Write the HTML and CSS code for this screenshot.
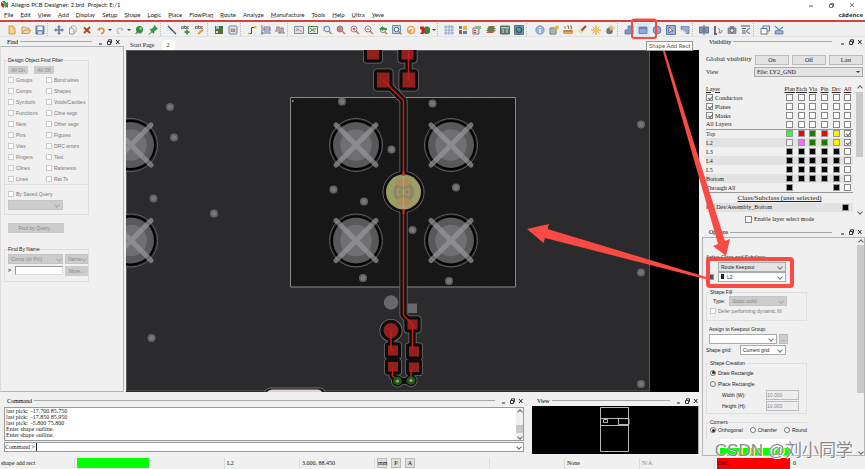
FILE: index.html
```html
<!DOCTYPE html>
<html lang="en">
<head>
<meta charset="utf-8">
<title>Allegro PCB Designer: 2.brd Project: E:/1</title>
<link rel="stylesheet" href="styles.css">
</head>
<body>
<div class="app">
  <header>
    <div class="titlebar">
      <svg class="logo" viewBox="0 0 8 8"><path d="M0 1l3 2v4l-3-2z" fill="#d22"/><path d="M3 3l4-2v3l-3 3z" fill="#2a3"/><path d="M1 0h3l1 2-2 1z" fill="#2a3"/><path d="M5 5l2-1v3z" fill="#d22"/></svg>
      <span class="title">Allegro PCB Designer: 2.brd&nbsp; Project: E:/1</span>
      <svg class="winctl" viewBox="0 0 46 8"><g fill="none" stroke="#555"><path d="M0 5h4"/><path d="M20.500 3.500h3v3h-3zM21.500 3.500v-1h3v3h-1" stroke-width=".8"/><path d="M41 2l4 4M45 2l-4 4" stroke-width=".8"/></g></svg>
    </div>
    <div class="menubar">
      <nav>
        <a href="#"><u>F</u>ile</a><a href="#"><u>E</u>dit</a><a href="#"><u>V</u>iew</a><a href="#"><u>A</u>dd</a><a href="#"><u>D</u>isplay</a><a href="#">Set<u>u</u>p</a><a href="#"><u>S</u>hape</a><a href="#"><u>L</u>ogic</a><a href="#"><u>P</u>lace</a><a href="#">FlowPla<u>n</u></a><a href="#"><u>R</u>oute</a><a href="#">Analy<u>z</u>e</a><a href="#"><u>M</u>anufacture</a><a href="#"><u>T</u>ools</a><a href="#"><u>H</u>elp</a><a href="#"><u>U</u>ltra</a><a href="#"><u>Y</u>eve</a>
      </nav>
      <span class="brand">cādence</span>
    </div>
  </header>

  <div class="toolbar">
    <button aria-label="New"><svg viewBox="0 0 10 10"><path d="M2 1h4l2 2v6H2z" fill="#f7d48a" stroke="#c08a3a" stroke-width=".8"/><path d="M6 1v2h2" fill="#fff" stroke="#c08a3a" stroke-width=".6"/></svg></button>
    <button aria-label="Open"><svg viewBox="0 0 10 10"><path d="M1 8.500V2h3l1 1h3v2" fill="#f6e2b5" stroke="#b98d45" stroke-width=".8"/><path d="M1 8.500L3 5h6.500L8 8.500z" fill="#fbd592" stroke="#b98d45" stroke-width=".8"/></svg></button>
    <button aria-label="Save"><svg viewBox="0 0 10 10"><path d="M1 1h8v8H1z" fill="#7894c4" stroke="#47608f" stroke-width=".8"/><path d="M2.500 1.500h5V5h-5z" fill="#fff"/><path d="M3 6.500h4V9H3z" fill="#cfd9ea"/></svg></button>
    <i class="sep"></i>
    <button aria-label="Move"><svg viewBox="0 0 10 10"><path d="M5 0l2 2.200H5.800v2h2V3L10 5 7.800 7V5.800h-2v2H7L5 10 3 7.800h1.200v-2h-2V7L0 5l2.200-2v1.200h2v-2H3z" fill="#5f7ea8"/></svg></button>
    <button aria-label="Copy"><svg viewBox="0 0 10 10"><path d="M3.500 1h3L8 2.500V7H3.500z" fill="#fff" stroke="#999" stroke-width=".8"/><path d="M1.500 3h3L6 4.500V9H1.500z" fill="#eee" stroke="#888" stroke-width=".8"/></svg></button>
    <button aria-label="Delete"><svg viewBox="0 0 10 10"><path d="M2 2.500l6 5.500M8 2L2 8" stroke="#b5401c" stroke-width="2"/></svg></button>
    <button aria-label="Undo"><svg viewBox="0 0 10 10"><path d="M3 4c3-2 5.500 0 5 2S6 8.500 5 8.500" fill="none" stroke="#e08a3a" stroke-width="1.500"/><path d="M1 4.500L4 2v4z" fill="#e08a3a"/></svg></button><i class="more"></i>
    <button aria-label="Redo"><svg viewBox="0 0 10 10"><path d="M7 4C4 2 2 4 2 6s2 2.500 3 2.500" fill="none" stroke="#c3c3c3" stroke-width="1.200"/><path d="M9 4.500L6 2v4z" fill="#c3c3c3"/></svg></button><i class="more"></i>
    <button aria-label="Unpin"><svg viewBox="0 0 10 10"><path d="M1.500 9L4 6" stroke="#555"/><circle cx="5.500" cy="4.500" r="3.500" fill="#2f8f45"/><circle cx="6.500" cy="3.500" r="1.500" fill="#7fca86"/><path d="M2 8h6" stroke="#777" stroke-width=".8"/></svg></button>
    <button aria-label="Pin"><svg viewBox="0 0 10 10"><path d="M1 9.500L4.500 6" stroke="#555"/><path d="M2 4.500l2-.5 2-2 .5-1.500L9.500 4 8 4.500l-2 2L5.500 8.500z" fill="#3d9a52" stroke="#26733a" stroke-width=".6"/></svg></button>
    <i class="sep"></i>
    <button aria-label="Line"><svg viewBox="0 0 10 10"><path d="M1 1l8 8" stroke="#42516b" stroke-width="1.200"/></svg></button>
    <button aria-label="Add text"><svg viewBox="0 0 10 10"><path d="M.5 1.500h2v2h-2zM3.500.500v3h2v-2h-2M8 1.500H6.500v2H8" fill="none" stroke="#555" stroke-width=".7"/><path d="M6 4.500v5M3.500 7h5" stroke="#3f9e4e" stroke-width="2"/></svg></button>
    <button aria-label="Edit text"><svg viewBox="0 0 10 10"><path d="M.5 1.500h2v2h-2zM3.500.500v3h2v-2h-2M8 1.500H6.500v2H8" fill="none" stroke="#555" stroke-width=".7"/><path d="M3 9l5-4.500" stroke="#e5963c" stroke-width="2"/></svg></button>
    <i class="sep"></i>
    <button aria-label="Place manual"><svg viewBox="0 0 10 10"><path d="M1 1h8v8H1z" fill="#2f7a42"/><path d="M2 1h3v3H2z" fill="#9cc9a2"/><path d="M5 4h3v4H5z" fill="#c33"/><path d="M2 6h2v2H2z" fill="#cde"/></svg></button>
    <button aria-label="Component"><svg viewBox="0 0 10 10"><rect x="1" y="1" width="8" height="8" rx="1" fill="#dde4ef" stroke="#7585a5"/><path d="M3 4h4v2.500H3z" fill="#c99" stroke="#a66" stroke-width=".6"/></svg></button>
    <i class="sep"></i>
    <button aria-label="Add connect"><svg viewBox="0 0 10 10"><path d="M2 8.500h2.500v-6H8" fill="none" stroke="#444"/><path d="M1 7.500h2v2H1zM7 1h2.500v2.500H7z" fill="#e9c23f"/></svg></button>
    <button aria-label="Slide"><svg viewBox="0 0 10 10"><path d="M1 0v10M0 8h10M3 2h6v4H3z" fill="none" stroke="#5877a8"/><path d="M3 4h6" stroke="#c55"/></svg></button>
    <button aria-label="Delay tune"><svg viewBox="0 0 10 10"><path d="M0 6h2V2h2v6h2V3h2v5h2" fill="none" stroke="#887777" stroke-width="1.200"/></svg></button>
    <i class="sep"></i>
    <button aria-label="Unrats"><svg viewBox="0 0 10 10"><path d="M.5 1.500h9v7h-9z" fill="#e8dede" stroke="#7c8cab"/><path d="M2 4h2l2 2h2M2 6l3-2" fill="none" stroke="#a77" stroke-width=".8"/></svg></button>
    <button aria-label="Rats"><svg viewBox="0 0 10 10"><path d="M.5 1.500h9v7h-9z" fill="#dcebdc" stroke="#4d765c"/><path d="M2 3l5 4M2 7l3-3h3" fill="none" stroke="#383" stroke-width=".9"/></svg></button>
    <button aria-label="Zoom by points"><svg viewBox="0 0 10 10"><path d="M1 1h5v5H1z" fill="#bcd0ea"/><circle cx="5" cy="4" r="2.800" fill="#dce9f8" stroke="#6782ad"/><path d="M7 6l2.500 3" stroke="#b9824e" stroke-width="1.500"/></svg></button>
    <button aria-label="Zoom fit"><svg viewBox="0 0 10 10"><circle cx="4" cy="4" r="3" fill="#c58585" stroke="#8d7d94"/><path d="M6 6l3 3" stroke="#b9824e" stroke-width="1.500"/></svg></button>
    <button aria-label="Zoom in"><svg viewBox="0 0 10 10"><circle cx="4" cy="4" r="3" fill="#fff" stroke="#95809a"/><path d="M2.500 4h3M4 2.500v3" stroke="#c33"/><path d="M6 6l3 3" stroke="#b9824e" stroke-width="1.500"/></svg></button>
    <button aria-label="Zoom out"><svg viewBox="0 0 10 10"><circle cx="4" cy="4" r="3" fill="#fff" stroke="#95809a"/><path d="M2.500 4h3" stroke="#c33"/><path d="M6 6l3 3" stroke="#b9824e" stroke-width="1.500"/></svg></button>
    <button aria-label="Zoom previous"><svg viewBox="0 0 10 10"><circle cx="5" cy="5" r="2.600" fill="#eee" stroke="#888"/><path d="M1 4l4-3v2h4v2H5v1z" fill="#3c9950"/><path d="M7 7l2 2" stroke="#b9824e" stroke-width="1.500"/></svg></button>
    <button aria-label="Zoom selection"><svg viewBox="0 0 10 10"><path d="M.5.500h8v8h-8z" fill="#bdd3ea" stroke="#6f8fb3"/><circle cx="4.500" cy="4.500" r="2.200" fill="#fff" stroke="#557"/><path d="M6.500 6.500L9.500 9.500" stroke="#b9824e" stroke-width="1.300"/></svg></button>
    <button aria-label="Refresh"><svg viewBox="0 0 10 10"><circle cx="5" cy="5" r="4.300" fill="#eda24a"/><path d="M3 5a2 2 0 1 1 2 2" fill="none" stroke="#fff" stroke-width="1.300"/></svg></button>
    <button aria-label="3D canvas"><svg viewBox="0 0 10 10"><path d="M0 1.500h3.500L5 3v5L3 9H0l1.500-2V5L0 4z" fill="#c52525"/><path d="M5 1.500h3L10 3v4.500L8 9H5z" fill="#23933a"/></svg></button><i class="more"></i>
    <i class="sep"></i>
    <button aria-label="Grid"><svg viewBox="0 0 10 10"><path d="M2 0v10M5 0v10M8 0v10M0 2h10M0 5h10M0 8h10" stroke="#8ea8cf" stroke-width="1"/></svg></button>
    <button aria-label="Color"><svg viewBox="0 0 10 10"><path d="M1 1h3v3H1z" fill="#489858"/><path d="M5 1h4v4H5z" fill="#e8b24a"/><path d="M1 5h3v4H1z" fill="#c85046"/><path d="M5 6h4v3H5z" fill="#5b7fb5"/></svg></button>
    <button aria-label="Shadow"><svg viewBox="0 0 10 10"><path d="M1 3h6v6H1z" fill="#ddd" stroke="#777"/><path d="M3 1h6v3H3z" fill="#9bb28f"/><path d="M2 5h2v1H2zM2 7h2v1H2z" fill="#c33"/></svg></button>
    <button aria-label="Layers"><svg viewBox="0 0 10 10"><path d="M0 8l3-3h7L7 8z" fill="#b8604b"/><path d="M0 6l3-3h7L7 6z" fill="#54864c"/><path d="M1 4l2-3h6L7 4z" fill="#8a6a4d"/></svg></button>
    <button aria-label="Cross section"><svg viewBox="0 0 10 10"><path d="M.5 1h9v8h-9z" fill="#467f60" stroke="#667"/><path d="M1 2h8v1.500H1z" fill="#adc5dd"/><path d="M3 4v4M7 4v4" stroke="#dde" stroke-width="1"/><path d="M5 4v3" stroke="#d55"/></svg></button>
    <button aria-label="World view"><svg viewBox="0 0 10 10"><path d="M.5.500h9v9h-9z" fill="#7692b8" stroke="#677"/><circle cx="5" cy="5" r="3.500" fill="#335f92"/><path d="M3 3l3 0 1 2-2 2-2-2z" fill="#61a36b"/></svg></button>
    <i class="sep wide"></i>
    <button aria-label="Info"><svg viewBox="0 0 10 10"><circle cx="5" cy="5" r="4.200" fill="#9db5dd" stroke="#7288b4" stroke-width=".8"/><path d="M5 4v4M5 2v1" stroke="#fff" stroke-width="1.300"/></svg></button>
    <button aria-label="Constraints"><svg viewBox="0 0 10 10"><path d="M1 3h6v6H1z" fill="#ddd" stroke="#666"/><path d="M3 4v4M5 4v4" stroke="#4a4"/><circle cx="8" cy="2.500" r="2" fill="#efb72f"/></svg></button>
    <button aria-label="Measure"><svg viewBox="0 0 10 10"><path d="M0 5h10v4H0z" fill="#eda24a"/><path d="M2 5v2M4 5v2M6 5v2M8 5v2M2 1v3M4 1h1.500v3M7 1h1.500v3H7" fill="none" stroke="#655" stroke-width=".7"/></svg></button>
    <button aria-label="Highlight"><svg viewBox="0 0 10 10"><path d="M1 5l3 4 3-4-2-2z" fill="#f3df88"/><path d="M5 5l4-4" stroke="#8a4b37" stroke-width="2"/><path d="M4 4l2 2" stroke="#c66" stroke-width="1.500"/></svg></button>
    <button aria-label="Brighten"><svg viewBox="0 0 10 10"><path d="M5 0v10M0 5h10M1.500 1.500l7 7M8.500 1.500l-7 7" stroke="#d9963b" stroke-width=".9"/><circle cx="5" cy="5" r="2.700" fill="#f7c34c"/></svg></button>
    <button aria-label="Dim"><svg viewBox="0 0 10 10"><path d="M6 0v6M3 3h7M4 1l4 4M8 1L4 5" stroke="#e5a33b" stroke-width=".9"/><circle cx="4.500" cy="6" r="3.300" fill="#6d7786"/><circle cx="6" cy="4" r="1.500" fill="#f0b84a"/></svg></button>
    <i class="sep"></i>
    <button aria-label="Shape add"><svg viewBox="0 0 10 10"><path d="M1 9V5h3V1h5v8z" fill="#8198c5" stroke="#5d74a2" stroke-width=".8"/></svg></button>
    <button class="on" aria-label="Shape Add Rect"><svg viewBox="0 0 10 10"><path d="M1 2h8v6.500H1z" fill="#93a7cf" stroke="#5d74a2" stroke-width=".8"/><path d="M1.500 2.500h7V4h-7z" fill="#6980b0"/></svg></button>
    <button aria-label="Shape add circle"><svg viewBox="0 0 10 10"><circle cx="5" cy="5" r="4" fill="#8ea3cd" stroke="#5d74a2" stroke-width=".8"/></svg></button>
    <button aria-label="Select shape"><svg viewBox="0 0 10 10"><path d="M.5.500h9v9h-9z" fill="#9eb1d6" stroke="#5f77a6"/><path d="M3 2l4 4H5l-2 2z" fill="#fff" stroke="#335" stroke-width=".6"/></svg></button>
    <button aria-label="Void"><svg viewBox="0 0 10 10"><path d="M1 1.500h8v7H6l-5-4z" fill="#95a8ce" stroke="#6d80ab" stroke-width=".8"/><path d="M2 5l4 3" stroke="#fff"/></svg></button>
    <i class="sep"></i>
    <button aria-label="Mirror"><svg viewBox="0 0 10 10"><path d="M.5 2h3.500v6H.5zM6 2h3.500v6H6z" fill="#8398bd" stroke="#4d5e80" stroke-width=".8"/><path d="M5 0v10" stroke="#445"/></svg></button>
    <button aria-label="Spin"><svg viewBox="0 0 10 10"><path d="M2 1v8M1 9h3" stroke="#667" stroke-width="1.800"/><path d="M5 3l2 2-1 3h2l1.500-3" fill="none" stroke="#789"/></svg></button>
    <button aria-label="Snapshot"><svg viewBox="0 0 10 10"><path d="M1 3h8v5.500H1zM3 1.500h4V3H3z" fill="#99a" stroke="#667" stroke-width=".6"/><circle cx="5" cy="5.500" r="2" fill="#dde" stroke="#556" stroke-width=".8"/></svg></button>
    <button aria-label="Align"><svg viewBox="0 0 10 10"><path d="M0 1h9M1 3.500h4M1 6h3M1 8h4" stroke="#556" stroke-width="1"/><path d="M9 3L5 6l4 3" fill="none" stroke="#6b8db5" stroke-width="1.200"/></svg></button>
    <i class="sep"></i>
    <button aria-label="Windows"><svg viewBox="0 0 10 10"><path d="M3 1h6.500v5H3z" fill="#dce5f5" stroke="#5c73a4"/><path d="M1 3.500h6v5.500H1z" fill="#fff" stroke="#5c73a4"/><path d="M5 9h3V6" fill="none" stroke="#e5a33b"/></svg></button>
    <button aria-label="Swap"><svg viewBox="0 0 10 10"><path d="M1 1l4 4 4-3" fill="none" stroke="#5c93a4" stroke-width="1.200"/><path d="M1 6l4-1 4 1v3H1z" fill="#9eb1d6" stroke="#5c73a4" stroke-width=".8"/></svg></button>
  </div>

  <div class="main">
    <div class="left">
      <div class="work">
        <section class="find">
          <div class="cap pad"><span>Find</span><hr><svg class="ctl" viewBox="0 0 22 6"><use href="#ctl"/></svg></div>
          <div class="findbox">
            <div class="group filter">
              <h3>Design Object Find Filter</h3>
              <div class="row"><button class="flat">All On</button><button class="flat">All Off</button></div>
              <div class="checks" id="checks"></div>
            </div>
            <div class="group saved">
              <label class="chk"><input type="checkbox" disabled>By Saved Query</label>
              <span class="sel dis"><select aria-label="Saved query" disabled><option></option></select></span>
            </div>
            <button class="flat query">Find by Query...</button>
            <div class="group byname">
              <h3>Find By Name</h3>
              <div class="nrow"><span class="sel dis"><select aria-label="Object type" disabled><option>Comp (or Pin)</option></select></span><span class="sel dis"><select aria-label="Name type" disabled><option>Name</option></select></span></div>
              <div class="nrow"><label class="gt"><b>&gt;</b><input type="text" aria-label="Name"></label><button class="flat">More...</button></div>
            </div>
          </div>
        </section>
        <section class="design">
          <div class="tabs"><a href="#">Start Page</a><a href="#" class="cur">2</a></div>
          <svg class="board" viewBox="126 50 573 342" preserveAspectRatio="xMinYMin slice">
            <defs>
              <g id="ctl" fill="none" stroke="#222"><path d="M1 5h3"/><path d="M9.500 2.500h3v3h-3zM10.500 2V.800h3v3h-1" stroke-width=".9"/><path d="M18 1l3.500 4M21.500 1L18 5"/></g>
              <g id="mount"><circle r="26.500" fill="#1b1b1c" stroke="#747476" stroke-width=".8"/><circle r="25" fill="#000"/><circle r="23" fill="#59595b"/><circle r="15.800" fill="#707072"/><path d="M-20-20L20 20M20-20L-20 20" stroke="#98989a" stroke-opacity=".7" stroke-width="5" stroke-linecap="round"/></g>
              <g id="dot"><circle r="4" fill="#636365"/><circle r="2.200" fill="#7a7a7c"/></g>
              <pattern id="mesh" width="3" height="3" patternUnits="userSpaceOnUse"><path d="M0 0h3v3H0z" fill="#151515"/><path d="M0 0l3 3M3 0L0 3" stroke="#1b1b1b" stroke-width=".5"/></pattern>
              <g id="pads"><path d="M367 46h12v13.500h-12zM401.500 46h12v13.500h-12zM377 72.500h12.500v15H377zM402.500 72.500H415v15h-12.500zM407.500 319.500h10v10h-10zM388 345.500h10v10h-10zM388 362h10v9.500h-10zM409 346.500h10v10h-10zM409 362.500h10v9.500h-10z"/><circle cx="391" cy="330.500" r="7.500"/></g>
              <g id="traces" fill="none"><path d="M408.500 50v30M383 80l20.500 20.500V315l9 9.500v26M391 330v19l1.500 2M392.500 367v9l5 5M413.500 367l-2.500 3v10"/></g>
            </defs>
            <path d="M126 50h574v342H126z" fill="#000"/>
            <path d="M126.500 50.500h523V391h-523z" fill="#2b2b2d" stroke="#5a5a5c"/>
            <path d="M290.500 97.500h225v189.500h-225z" fill="url(#mesh)" stroke="#8a8a8c"/>
            <path d="M292 100h1.500v2H292z" fill="#888"/>
            <use href="#mount" x="131" y="145"/><use href="#mount" x="131" y="240.500"/><use href="#mount" x="356" y="145"/><use href="#mount" x="451" y="145"/><use href="#mount" x="356" y="240.500"/><use href="#mount" x="451" y="240.500"/>
            <use href="#dot" x="170" y="107"/><use href="#dot" x="174" y="137.500"/><use href="#dot" x="153.500" y="198.500"/><use href="#dot" x="214" y="213.500"/><use href="#dot" x="342" y="101.500"/><use href="#dot" x="391.500" y="149.500"/><use href="#dot" x="333.500" y="189.500"/><use href="#dot" x="364" y="201.500"/><use href="#dot" x="432.500" y="103.500"/><use href="#dot" x="456" y="187.500"/><use href="#dot" x="641" y="124.500"/><use href="#dot" x="641" y="272.500"/><use href="#dot" x="641" y="384"/><use href="#dot" x="412.500" y="230"/><use href="#dot" x="363" y="278"/><use href="#dot" x="449" y="281"/><use href="#dot" x="151.500" y="338"/>
            <g stroke="#707072" stroke-width="8" stroke-linejoin="round"><use href="#pads"/><use href="#traces"/><circle cx="403.500" cy="192" r="17"/><path d="M397.500 381h13.500"/><circle cx="397.500" cy="381" r="2.500"/><circle cx="411" cy="380.500" r="2.500"/></g>
            <g stroke="#0d0d0d" stroke-width="6.400" stroke-linejoin="round"><use href="#pads"/><use href="#traces"/><circle cx="403.500" cy="192" r="17"/><path d="M397.500 381h13.500"/><circle cx="397.500" cy="381" r="2.500"/><circle cx="411" cy="380.500" r="2.500"/></g>
            <circle cx="391" cy="302.500" r="7.200" fill="#68686a"/><path d="M407.500 303.500h9.500v9.500h-9.500z" fill="#68686a"/>
            <use href="#pads" fill="#92201c"/>
            <use href="#traces" stroke="#c61d1a" stroke-width="1.600"/>
            <circle cx="403.500" cy="192" r="17.500" fill="#9c9c66"/>
            <circle cx="403.500" cy="192" r="10.500" fill="#8b8668"/>
            <path d="M398 179h11l3 4-5 3h-7l-5-3zM398 205h11l3-4-5-3h-7l-5 3z" fill="#ad8d5c"/>
            <path d="M398 188l11 8v-8l-11 8zM403.500 175v34" fill="none" stroke="#c3a452" stroke-width=".8"/>
            <path d="M403.500 171v5M403.500 209v5" stroke="#e22" stroke-width="1.800"/>
            <g fill="#1f5c12"><circle cx="397.500" cy="381" r="4.300"/><circle cx="411" cy="380.500" r="4.300"/></g><g fill="#9aa88a"><circle cx="397.500" cy="381" r="1.500"/><circle cx="411" cy="380.500" r="1.500"/></g>
            <path d="M264.500 392q1-4 6-4h50q4 0 4.500 4" fill="#111" stroke="#888" stroke-width=".8"/><path d="M267 392q2-2.500 5-2.500h46q3 0 4 2.500z" fill="#e5cfd2"/>
          </svg>
        </section>
      </div>
      <div class="bottom">
        <section class="command">
          <div class="cap"><span>Command</span><hr><svg class="ctl" viewBox="0 0 22 6"><use href="#ctl"/></svg></div>
          <div class="log"><div class="lines"><p>last pick:&nbsp; -17.700 85.750</p><p>last pick:&nbsp; -17.850 85.950</p><p>last pick:&nbsp; -5.800 75.800</p><p>Enter shape outline.</p><p>Enter shape outline.</p></div><div class="sb"><i class="up"></i><b></b><i class="dn"></i></div></div>
          <div class="prompt"><label for="cmd">Command &gt;</label><input id="cmd" type="text"><i class="dn"></i></div>
        </section>
        <section class="view">
          <div class="cap"><span>View</span><hr><svg class="ctl" viewBox="0 0 22 6"><use href="#ctl"/></svg></div>
          <svg class="mini" viewBox="533 407 166 48"><g fill="none" stroke="#ccc" stroke-width=".9"><path d="M601.500 408.500h28v44h-28zM601.500 419.500h28M601.500 426.500h28M619.500 419.500h10.500v6h-10.500zM604.500 420.500h4v3h-4z"/></g></svg>
        </section>
      </div>
    </div>

    <aside class="right">
      <section class="vis">
        <div class="cap"><span>Visibility</span><hr><svg class="ctl" viewBox="0 0 22 6"><use href="#ctl"/></svg></div>
        <div class="glob"><span>Global visibility</span><button>On</button><button>Off</button><button>Last</button></div>
        <div class="film"><label for="film">View</label><span class="sel tri"><select id="film"><option>File: LY2_GND</option></select></span></div>
        <div class="layers">
          <div class="lwrap">
            <table id="layers"></table>
            <p class="sub">Class/Subclass (user selected)</p>
            <div class="asm"><span>Ref Des/Assembly_Bottom</span><i class="sw black"></i></div>
          </div>
          <div class="sb tall"><i class="up"></i><b></b><i class="dn"></i></div>
        </div>
        <label class="enable"><input type="checkbox">Enable layer select mode</label>
      </section>
      <section class="opts">
        <div class="cap"><span>Options</span><hr><svg class="ctl" viewBox="0 0 22 6"><use href="#ctl"/></svg></div>
        <div class="obox">
          <div class="oform">
            <p class="act">Active Class and Subclass:</p>
            <div class="cls"><span class="sel gray"><select aria-label="Active class"><option>Route Keepout</option></select></span></div>
            <div class="cls"><i class="sq"></i><span class="sel"><i class="chip"></i><select class="subc" aria-label="Active subclass"><option>L2</option></select></span></div>
            <div class="group ofs fill">
              <h3>Shape Fill</h3>
              <div class="type"><label for="type">Type:</label><span class="sel dis"><select id="type" disabled><option>Static solid</option></select></span></div>
              <label class="chk"><input type="checkbox" disabled>Defer performing dynamic fill</label>
            </div>
            <label class="assign" for="grp">Assign to Keepout Group:</label>
            <div class="grp"><span class="sel"><select id="grp"><option></option></select></span><button class="flat">...</button></div>
            <div class="grid"><label for="grid">Shape grid:</label><span class="sel"><select id="grid"><option>Current grid</option></select></span></div>
            <div class="group ofs creation">
              <h3>Shape Creation</h3>
              <label class="rad"><input type="radio" name="mk" checked>Draw Rectangle</label>
              <label class="rad"><input type="radio" name="mk">Place Rectangle</label>
              <div class="dim"><label for="w">Width (W):</label><input id="w" type="text" value="10.000" disabled></div>
              <div class="dim"><label for="h">Height (H):</label><input id="h" type="text" value="10.000" disabled></div>
            </div>
            <div class="group corners">
              <h3>Corners</h3>
              <div class="crow"><label class="rad"><input type="radio" name="c" checked>Orthogonal</label><label class="rad"><input type="radio" name="c">Chamfer</label><label class="rad"><input type="radio" name="c">Round</label></div>
            </div>
            <div class="preview"></div>
          </div>
          <div class="sb tall"><i class="up"></i><b></b><i class="dn"></i></div>
        </div>
      </section>
    </aside>
  </div>

  <footer>
    <span>shape add rect</span><span><i class="green"></i></span><span></span><span>L2</span><span>3.000, 88.450</span><span class="btns"><button>mm</button><button>P</button><button>A</button></span><span></span><span>None</span><span class="na">N/A</span><span class="drc"><i>DRC</i>0</span>
  </footer>

  <svg class="notes" viewBox="0 0 865 469">
    <g fill="#f94a44"><path d="M662 48h2l61 193 5-2-4 17-13-10 5-2z"/><path d="M527 229l22-5-1.500 5L708 277.500l-1 2L545 238l-1.500 5z"/></g>
    <rect x="632" y="19.500" width="24" height="18.500" rx="2" fill="none" stroke="#f94a44" stroke-width="2"/>
    <rect x="708" y="259" width="84" height="27" rx="2" fill="none" stroke="#f94a44" stroke-width="4"/>
  </svg>
  <div class="tip">Shape Add Rect</div>
  <div class="mark">CSDN @刘小同学</div>
</div>
<script src="app.js"></script>
</body>
</html>
```
FILE: styles.css
```css
* { box-sizing: border-box; }
body { margin: 0; background: #f0f0f0; color: #222; font: 5px/8px "Liberation Sans", Arial, sans-serif; }
p, h3 { margin: 0; font: inherit; }
button, input, select { font: inherit; color: inherit; margin: 0; padding: 0; min-width: 0; }
a { color: inherit; text-decoration: none; }
i { font-style: normal; }
.app { position: relative; height: 100vh; min-height: 469px; display: flex; flex-direction: column; overflow: hidden; }

header { background: #fff; border-bottom: 2px solid #d8413b; font: 6px/10px Lato, sans-serif; flex: none; }
.titlebar { display: flex; height: 10px; align-items: center; padding-left: 1px; }
.logo { width: 8px; height: 8px; margin-right: 2px; }
.winctl { width: 46px; height: 8px; margin: 0 10px 0 auto; }
.menubar { display: flex; height: 10px; justify-content: space-between; padding: 0 2px 0 4px; }
.menubar nav { display: flex; gap: 7px; }
.menubar u { text-underline-offset: 0; text-decoration-thickness: 1px; text-decoration-color: #bbb; }
.brand { font: bold 6px/10px "Open Sans", sans-serif; color: #333; }

.toolbar { display: flex; flex: none; height: 15px; padding: 1px 0 0 5px; border-bottom: 1px solid #e2e2e2; }
.toolbar button { width: 14px; height: 13px; flex: none; border: 0; background: none; display: flex; align-items: center; justify-content: center; }
.toolbar button.on { background: #d3eaf8; }
.toolbar svg { width: 10px; height: 10px; }
.sep { width: 5px; flex: none; border-left: 1px dotted #bbb; }
.sep.wide { width: 7px; }
.more { width: 5px; flex: none; display: flex; align-items: center; }
.more::before { content: ""; border: 2px solid transparent; border-top-color: #444; border-bottom: 0; }

.main { flex: 1; display: flex; min-height: 0; }
.left { flex: 1; display: flex; flex-direction: column; min-width: 0; }
.work { flex: 1; display: flex; min-height: 0; }
.find { width: 125px; display: flex; flex-direction: column; flex: none; }
.cap { display: flex; align-items: center; height: 9px; flex: none; font: 6px/8px "Liberation Serif", serif; }
.cap span { color: #000; }
.cap hr { flex: 1; border: 0; border-top: 1px solid #a8a8a8; margin: 0 6px 0 2px; }
.ctl { width: 22px; height: 6px; }
.pad { padding: 0 5px 0 7px; }
.findbox { flex: 1; border: 1px solid #b4b4bc; border-left-color: #ddd; margin-right: 1px; padding: 13px 4px 0 3px; color: #777; }
.group { border: 1px solid #dedede; width: 85px; padding: 0 3px; }
.group h3 { width: max-content; background: #f0f0f0; color: #222; margin-top: -5px; }
.row { display: flex; gap: 6px; margin: 2px 0 0; }
.flat { border: 0; background: #ccc; color: #8a8a8a; height: 8px; line-height: 8px; padding: 0 3px; text-align: center; }
.row .flat { width: 20px; padding: 0; }
.checks { display: grid; grid-template-columns: 38px 1fr; grid-auto-rows: 11px; align-items: center; }
.chk { display: flex; align-items: center; gap: 2px; white-space: nowrap; color: #777; }
input[type=checkbox] { appearance: none; width: 6px; height: 6px; border: 1px solid #ccc; background: #fff; flex: none; }
.filter { height: 124px; border-bottom: 0; }
.saved { padding-top: 5px; height: 31px; }
.sel { position: relative; display: flex; height: 10px; background: #fff; border: 1px solid #aaa; }
.sel select { appearance: none; border: 0; background: none; width: 100%; padding: 0 6px 0 2px; line-height: 8px; opacity: 1; }
.sel::after { content: ""; position: absolute; right: 3px; top: 2px; width: 3px; height: 3px; border: solid #777; border-width: 0 1px 1px 0; transform: rotate(45deg); }
.sel.dis { background: #ccc; border-color: #c4c4c4; color: #888; }
.sel.dis::after { border-color: #aaa; }
.sel.gray { background: #e3e3e3; }
.saved .sel { width: 55px; margin-top: 2px; }
.query { width: 56px; height: 10px; margin: 8px 0 0 4px; display: block; }
.byname { margin-top: 16px; height: 33px; }
.nrow { display: grid; grid-template-columns: 55px 23px; gap: 2px; margin: 1px 0 2px; }
.nrow .sel select { padding-right: 0; }
.nrow .sel::after { right: 1px; }
.gt { display: flex; justify-content: space-between; color: #222; }
.gt input { width: 48px; height: 9px; border: 1px solid #999; border-right-color: #ddd; border-bottom-color: #ddd; background: #fff; }
.nrow .flat { height: 10px; }

.design { flex: 1; display: flex; flex-direction: column; min-width: 0; padding: 0 1px 0 1px; }
.tabs { display: flex; height: 13px; padding-top: 3px; font: 6px/10px "Liberation Serif", serif; flex: none; }
.tabs a { padding: 0 7px 0 4px; }
.tabs .cur { background: #fff; padding: 0 5px; }
.board { flex: 1; min-height: 0; width: 100%; background: #000; }

.bottom { display: flex; height: 64px; gap: 8px; flex: none; padding: 4px 1px 0 4px; }
.command { flex: 1; min-width: 0; display: flex; flex-direction: column; }
.command .cap { padding: 0 1px 0 3px; }
.log { display: flex; height: 34px; border: 1px solid #9a9a9a; background: #fff; font: 6px/6px "Liberation Serif", serif; margin-top: 2px; }
.lines { flex: 1; display: flex; flex-direction: column; justify-content: flex-end; padding: 0 1px 2px; overflow: hidden; }
.lines p { flex: none; height: 6px; }
.prompt { display: flex; align-items: center; height: 10px; border: 1px solid #9a9a9a; background: #fff; margin-top: 1px; font: 6px/8px "Liberation Serif", serif; padding-right: 1px; }
.prompt label { flex: none; white-space: nowrap; }
.prompt input { flex: 1; border: 0; border-left: 1px solid #222; margin-left: 1px; height: 8px; background: none; }
.sb { width: 7px; display: flex; flex-direction: column; align-items: center; justify-content: space-between; background: #f0f0f0; flex: none; }
.sb b { width: 7px; height: 8px; background: #c9c9c9; margin-top: 10px; }
.up, .dn { width: 7px; height: 7px; display: flex; align-items: center; justify-content: center; }
.up::before, .dn::before { content: ""; width: 3px; height: 3px; border: solid #666; border-width: 1px 0 0 1px; transform: rotate(45deg); }
.dn::before { transform: rotate(225deg); }
.tall { justify-content: flex-start; }
.tall .dn { margin-top: auto; }
.view { width: 167px; display: flex; flex-direction: column; }
.view .cap { padding: 0 1px 0 5px; }
.mini { height: 48px; background: #000; margin-top: 1px; border-right: 1px solid #aaa; }

.right { width: 165px; flex: none; display: flex; flex-direction: column; font-size: 5px; }
.vis { font: 6px/9px "Liberation Serif", serif; padding: 0 2px 0 6px; height: 190px; flex: none; }
.vis .cap { padding: 0 1px 0 3px; }
.right .cap .ctl { margin-left: 2px; }
.glob { display: grid; grid-template-columns: 46px 1fr 1fr 1fr; gap: 3px; margin-top: 9px; }
.glob span { white-space: nowrap; font-size: 7px; }
.glob button { height: 10px; border: 1px solid #bbb; background: #e3e3e3; line-height: 8px; }
.film { display: grid; grid-template-columns: 48px 1fr; margin-top: 2px; align-items: center; }
.film .sel { background: #e3e3e3; }
.sel.tri::after { width: 0; height: 0; border: 2px solid transparent; border-top-color: #333; border-bottom: 0; transform: none; top: 3px; right: 2px; }
.layers { display: flex; margin-top: 7px; justify-content: space-between; }
.lwrap { width: 147px; }
.layers .sb { height: 131px; }
.layers .sb b { height: 65px; margin-top: 1px; }
table { border-collapse: collapse; table-layout: fixed; width: 147px; }
td, th { padding: 0; height: 9px; text-align: center; font-weight: normal; line-height: 8px; }
td:first-child, th:first-child { text-align: left; width: 78px; white-space: nowrap; }
td:last-child, th:last-child { width: 11px; }
th { text-decoration: underline; }
tr.alt { background: #e2e2e2; }
tr.rule td { border-top: 1px solid #999; }
td label { display: flex; gap: 2px; align-items: center; }
td input[type=checkbox], .enable input, td .sw { display: block; margin: 0 auto; }
td label input[type=checkbox] { margin: 0; }
.vis input[type=checkbox] { border-color: #888; width: 7px; height: 7px; }
.vis input:checked::after { content: ""; display: block; width: 2px; height: 4px; border: solid #666; border-width: 0 1px 1px 0; transform: rotate(45deg); margin-left: 2px; }
.sw { width: 7px; height: 7px; border: 1px solid #999; display: block; }
.black { background: #000; }
.sub { text-align: center; border-top: 1px solid #999; text-decoration: underline; font-size: 7px; line-height: 10px; }
.asm { display: flex; justify-content: space-between; align-items: center; background: #e2e2e2; padding-right: 4px; height: 9px; }
.enable { display: flex; gap: 2px; align-items: center; margin-left: 39px; }
.enable input { margin: 0; }

.opts { flex: 1; display: flex; flex-direction: column; padding-left: 2px; min-height: 0; }
.opts .cap { padding: 0 3px 0 7px; height: 10px; }
.obox { flex: 1; display: flex; border: 1px solid #b4b4b4; justify-content: space-between; min-height: 0; overflow: hidden; }
.oform { width: 103px; padding: 15px 0 0 3px; }
.obox .sb b { height: 148px; margin-top: 0; }
.act { white-space: nowrap; margin-bottom: 1px; }
.cls { display: flex; align-items: center; justify-content: flex-end; gap: 4px; padding-right: 20px; }
.cls .sel { width: 68px; }
.sq { width: 6px; height: 6px; background: #555; border: 1px solid #999; }
.chip { width: 3px; height: 5px; background: #222; position: absolute; left: 2px; top: 1px; }
.sel .subc { padding-left: 8px; }
.ofs { width: 101px; }
.fill { margin-top: 10px; height: 29px; }
.type { display: flex; align-items: center; padding-left: 3px; gap: 4px; }
.type .sel { width: 58px; }
.fill .chk { margin-top: 1px; }
.assign { display: block; margin: 4px 0 1px 3px; }
.grp { display: flex; gap: 2px; padding-left: 3px; }
.grp .sel { width: 68px; }
.grp .flat { width: 9px; height: 10px; padding: 0; border: 1px solid #bbb; line-height: 6px; color: #444; }
.grid { display: flex; align-items: center; justify-content: space-between; padding-right: 20px; margin-top: 1px; }
.grid .sel { width: 46px; }
.creation { margin-top: 8px; height: 51px; }
.rad { display: flex; align-items: center; gap: 2px; }
.creation .rad { height: 11px; }
input[type=radio] { appearance: none; width: 6px; height: 6px; border: 1px solid #777; border-radius: 50%; background: #fff; display: flex; align-items: center; justify-content: center; }
input[type=radio]:checked::after { content: ""; width: 3px; height: 3px; border-radius: 50%; background: #222; }
.dim { display: grid; grid-template-columns: 44px 33px; padding-left: 12px; height: 11px; align-items: center; }
.dim input { height: 10px; border: 1px solid #bbb; background: #eee; color: #888; }
.corners { margin-top: 8px; border-right: 0; border-bottom: 0; width: 101px; height: 17px; }
.crow { display: flex; gap: 7px; }
.preview { width: 70px; height: 22px; margin-left: 14px; border-top: 9px solid #fff; background: #00ff00; }

footer { flex: none; height: 13px; display: grid; grid-template-columns: 74px 75px 75px 75px 75px 115px 75px 75px 75px 1fr; font: 6px/10px "Liberation Serif", serif; align-items: center; padding-top: 1px; }
footer > span { padding-left: 2px; border-left: 1px solid #ddd; height: 11px; display: flex; align-items: center; color: #111; }
footer > span:first-child, footer > span:nth-child(3) { border-left: 0; padding-left: 1px; }
.green { width: 73px; height: 10px; background: #00ff00; }
.btns { gap: 4px; }
.btns button { width: 10px; height: 10px; border: 1px solid #bbb; background: #ddd; line-height: 8px; }
footer .na { color: #888; }
.drc i { width: 73px; height: 11px; background: #f00; color: #600; margin-right: 3px; }

.notes { position: absolute; left: 0; top: 0; width: 865px; height: 469px; pointer-events: none; }
.tip { position: absolute; left: 646px; top: 41px; border: 1px solid #999; background: #fff; padding: 0 2px; font: 6px/8px Lato, sans-serif; color: #555; white-space: nowrap; }
.mark { position: absolute; right: 12px; bottom: 6px; font: 17px/24px "Liberation Sans", "Noto Sans CJK SC", sans-serif; color: #8a8a8a; text-shadow: 0 0 1px #fff, 1px 1px 0 #fff; white-space: nowrap; }
```
FILE: app.js
```js
const names = ["Groups", "Bond wires", "Comps", "Shapes", "Symbols", "Voids/Cavities", "Functions", "Cline segs", "Nets", "Other segs", "Pins", "Figures", "Vias", "DRC errors", "Fingers", "Text", "Clines", "Ratsnests", "Lines", "Rat Ts"];
document.getElementById("checks").innerHTML = names
  .map(n => `<label class="chk"><input type="checkbox" disabled>${n}</label>`).join("");

const box = (on, label) => `<input type="checkbox" aria-label="${label}"${on ? " checked" : ""}>`;
const cols = ["Plan", "Etch", "Via", "Pin", "Drc", "All"];
let html = `<tr><th>Layer</th>${cols.map(c => `<th>${c}</th>`).join("")}</tr>`;
for (const n of ["Conductors", "Planes", "Masks", "All Layers"]) {
  const head = n === "All Layers" ? n : `<label>${box(true, n)}${n}</label>`;
  html += `<tr><td>${head}</td>${cols.map(c => `<td>${box(false, n + " " + c)}</td>`).join("")}</tr>`;
}
const k = "#000";
const layers = [
  ["Top", ["#2bff2b", "#f00", "#1f7a00", "#f00", "#f5f500"], true],
  ["L2", ["#eee", "#ff66ff", "#1f7a00", "#1f7a00", "#f5f500"], true],
  ["L3", [k, k, k, k, k]], ["L4", [k, k, k, k, k]], ["L5", [k, k, k, k, k]],
  ["Bottom", [k, k, k, k, k]], ["Through All", [k, "", "", "", k]]
];
layers.forEach(([n, sw, on], i) => {
  const cls = (i === 0 ? "rule " : "") + (i % 2 ? "alt" : "");
  html += `<tr class="${cls}"><td>${n}</td>${sw.map(c => c ? `<td><i class="sw" style="background:${c}"></i></td>` : "<td></td>").join("")}<td>${box(on, n + " All")}</td></tr>`;
});
document.getElementById("layers").innerHTML = html;
```
